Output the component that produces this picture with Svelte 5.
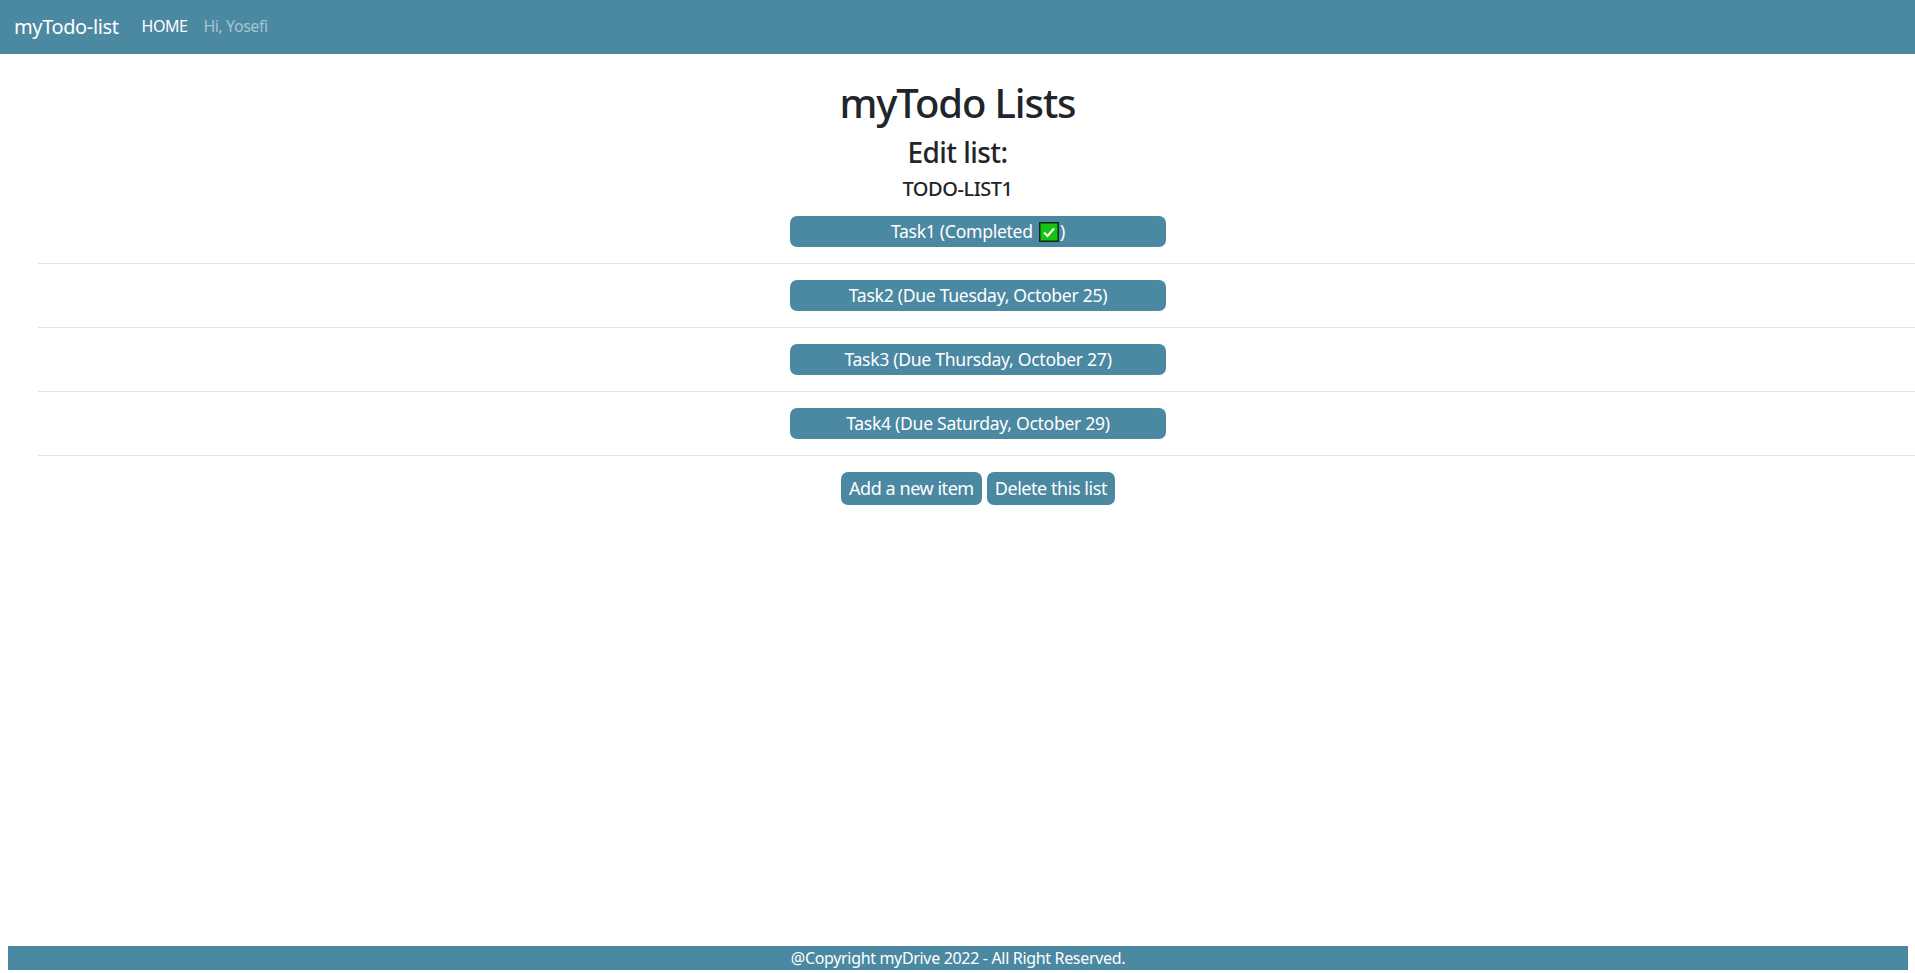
<script>
  let tasks = [
    { name: "Task1 (Completed ", done: true },
    { name: "Task2 (Due Tuesday, October 25)" },
    { name: "Task3 (Due Thursday, October 27)" },
    { name: "Task4 (Due Saturday, October 29)" },
  ];
</script>

<div class="page">
  <nav class="navbar">
    <a class="brand" href="#top">myTodo-list</a>
    <a class="nav-link active" href="#top">HOME</a>
    <span class="nav-link">Hi, Yosefi</span>
  </nav>

  <main class="content">
    <h1>myTodo Lists</h1>
    <h2>Edit list:</h2>
    <h3>TODO-LIST1</h3>

    <div class="list">
      {#each tasks as task}
        <div class="row">
          <button class="task">
            {task.name}{#if task.done}<svg class="check" viewBox="0 0 20 20" aria-hidden="true">
                <rect x="0.75" y="0.75" width="18.5" height="18.5" fill="#14c40f" stroke="#14261c" stroke-width="1.5" />
                <path d="M5 10.5 L8.5 14 L15 6.5" fill="none" stroke="#fff" stroke-width="2" />
              </svg>){/if}
          </button>
        </div>
      {/each}
      <div class="actions">
        <button class="action">Add a new item</button>
        <button class="action">Delete this list</button>
      </div>
    </div>
  </main>

  <footer class="footer">@Copyright myDrive 2022 - All Right Reserved.</footer>
</div>

<style>
  :global(body) {
    margin: 0;
    background: #fff;
    color: #212529;
    font-family: "Noto Sans", "Open Sans", sans-serif;
    overflow: hidden;
  }
  .page {
    display: flex;
    flex-direction: column;
    min-height: 973px;
  }
  .navbar {
    display: flex;
    align-items: center;
    height: 54px;
    padding: 0 14px 2px;
    box-sizing: border-box;
    background: #4b88a2;
  }
  .brand {
    margin-right: 23px;
    color: #fff;
    font-size: 20px;
    letter-spacing: -0.38px;
    text-decoration: none;
  }
  .nav-link {
    margin-right: 16px;
    color: rgba(255, 255, 255, 0.5);
    font-size: 16px;
    letter-spacing: -0.45px;
    text-decoration: none;
  }
  .nav-link.active {
    color: #fff;
  }
  .content {
    flex: 1;
    text-align: center;
  }
  h1 {
    margin: 25px 0 0;
    font-size: 40px;
    font-weight: 500;
    line-height: 48px;
    letter-spacing: -1.1px;
  }
  h2 {
    margin: 10px 0 0;
    font-size: 28px;
    font-weight: 500;
    line-height: 31px;
    letter-spacing: -0.55px;
  }
  h3 {
    margin: 9px 0 0;
    font-size: 20px;
    font-weight: 500;
    line-height: 24px;
    letter-spacing: -0.45px;
  }
  .list {
    margin: 15px -3px 0 38px;
  }
  .row {
    padding-bottom: 16px;
    margin-bottom: 16px;
    border-bottom: 1px solid #e2e3e4;
  }
  .task {
    display: block;
    box-sizing: border-box;
    width: 376px;
    height: 31px;
    margin: 0 auto;
    padding: 0 0 2px;
    border: none;
    border-radius: 7px;
    background: #4b88a2;
    color: #fff;
    font-family: inherit;
    font-size: 17.6px;
    letter-spacing: -0.3px;
  }
  .check {
    display: inline-block;
    width: 20px;
    height: 20px;
    margin: 0 1px 0 2px;
    vertical-align: -4px;
  }
  .actions {
    display: flex;
    justify-content: center;
    gap: 5px;
  }
  .action {
    height: 33px;
    padding: 0 8px 2px;
    border: none;
    border-radius: 7px;
    background: #4b88a2;
    color: #fff;
    font-family: inherit;
    font-size: 18px;
    letter-spacing: -0.45px;
  }
  .footer {
    height: 24px;
    margin: 0 7px 3px 8px;
    background: #4b88a2;
    color: #fff;
    font-size: 16px;
    line-height: 24px;
    letter-spacing: -0.33px;
    text-align: center;
  }
</style>
